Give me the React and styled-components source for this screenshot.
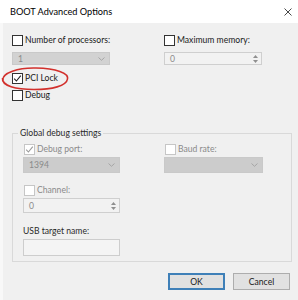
import React from "react";
import styled, { createGlobalStyle } from "styled-components";

const GlobalStyle = createGlobalStyle`
  html, body {
    margin: 0;
    padding: 0;
  }
  body {
    width: 298px;
    height: 300px;
    overflow: hidden;
    background: #f0f0f0;
    font-family: Lato, "Liberation Sans", sans-serif;
    font-size: 8.6px;
    color: #1a1a1a;
  }
`;

const Check = ({ checked, disabled }) => (
  <Box $disabled={disabled}>
    {checked && (
      <svg width="9" height="9" viewBox="0 0 9 9">
        <path
          d="M1.2 4.6 L3.4 7 L7.8 1.6"
          fill="none"
          stroke={disabled ? "#9a9a9a" : "#222"}
          strokeWidth="1.1"
        />
      </svg>
    )}
  </Box>
);

const CheckField = ({ label, checked, disabled, mt }) => (
  <CheckRow $disabled={disabled} $mt={mt}>
    <Check checked={checked} disabled={disabled} />
    <span>{label}</span>
  </CheckRow>
);

const Chevron = () => (
  <svg width="7" height="4" viewBox="0 0 7 4">
    <path d="M0.5 0.5 L3.5 3.3 L6.5 0.5" fill="none" stroke="#a6a6a6" strokeWidth="1" />
  </svg>
);

const SpinArrows = () => (
  <Arrows>
    <svg width="5" height="3" viewBox="0 0 5 3">
      <path d="M2.5 0 L5 3 L0 3 Z" fill="#8f8f8f" />
    </svg>
    <svg width="5" height="3" viewBox="0 0 5 3">
      <path d="M0 0 L5 0 L2.5 3 Z" fill="#8f8f8f" />
    </svg>
  </Arrows>
);

export default function App() {
  return (
    <Window>
      <GlobalStyle />
      <TitleBar>
        <span>BOOT Advanced Options</span>
        <svg width="8" height="8" viewBox="0 0 8 8">
          <path d="M0.5 0.5 L7.5 7.5 M7.5 0.5 L0.5 7.5" stroke="#333" strokeWidth="0.9" />
        </svg>
      </TitleBar>

      <Body>
        <Columns $left={152}>
          <Field $gap={6}>
            <CheckField label="Number of processors:" />
            <Select $w={98} $h={13} $bg="#d2d2d2">
              <span>1</span>
              <Chevron />
            </Select>
          </Field>
          <Field $gap={6}>
            <CheckField label="Maximum memory:" />
            <Spinner $w={98} $h={13}>
              <span>0</span>
              <SpinArrows />
            </Spinner>
          </Field>
        </Columns>

        <CheckField label="PCI Lock" checked mt={8} />
        <CheckField label="Debug" mt={6} />

        <Group>
          <Legend>Global debug settings</Legend>
          <GroupBody $left={141}>
            <Field $gap={2}>
              <CheckField label="Debug port:" checked disabled />
              <Select $w={97} $h={16} $bg="#cccccc">
                <span>1394</span>
                <Chevron />
              </Select>
              <CheckField label="Channel:" disabled mt={10} />
              <Spinner $w={97} $h={15}>
                <span>0</span>
                <SpinArrows />
              </Spinner>
              <FieldLabel>USB target name:</FieldLabel>
              <TextBox />
            </Field>
            <Field $gap={2}>
              <CheckField label="Baud rate:" disabled />
              <Select $w={99} $h={16} $bg="#cccccc">
                <span />
                <Chevron />
              </Select>
            </Field>
          </GroupBody>
        </Group>

        <Buttons>
          <Button $primary>OK</Button>
          <Button>Cancel</Button>
        </Buttons>
      </Body>

      <Circle width="72" height="30" viewBox="0 0 72 30">
        <path
          d="M3 16 C2 9 18 3.5 36 4 C56 4.5 69 9 67.5 15 C66.5 22 52 25.5 34 25.5 C16 25.5 1.5 22 2.5 14"
          fill="none"
          stroke="#d2302c"
          strokeWidth="1.6"
        />
      </Circle>
    </Window>
  );
}

const Window = styled.div`
  position: relative;
  width: 298px;
  height: 300px;
  display: flex;
  flex-direction: column;
  background: #f0f0f0;
`;

const TitleBar = styled.header`
  height: 23px;
  flex: none;
  box-sizing: border-box;
  display: flex;
  align-items: center;
  justify-content: space-between;
  padding: 0 6px 0 10px;
  background: #fff;
  color: #000;
  font-size: 9.2px;
`;

const Body = styled.div`
  flex: 1;
  display: flex;
  flex-direction: column;
  padding: 12px 6px 0 9px;
  border-left: 3px solid #f8f8f8;
`;

const Columns = styled.div`
  display: grid;
  grid-template-columns: ${(p) => p.$left}px 1fr;
`;

const Field = styled.div`
  display: flex;
  flex-direction: column;
  align-items: flex-start;
  gap: ${(p) => p.$gap}px;
`;

const CheckRow = styled.label`
  display: flex;
  align-items: center;
  gap: 2px;
  height: 11px;
  line-height: 11px;
  margin-top: ${(p) => p.$mt || 0}px;
  color: ${(p) => (p.$disabled ? "#8a8a8a" : "#1a1a1a")};
  white-space: nowrap;
`;

const Box = styled.span`
  width: 11px;
  height: 11px;
  box-sizing: border-box;
  display: flex;
  align-items: center;
  justify-content: center;
  background: #fff;
  border: 1px solid ${(p) => (p.$disabled ? "#c6c6c6" : "#333")};
`;

const Select = styled.div`
  box-sizing: border-box;
  width: ${(p) => p.$w}px;
  height: ${(p) => p.$h}px;
  display: flex;
  align-items: center;
  justify-content: space-between;
  padding: 0 4px 0 5px;
  background: ${(p) => p.$bg};
  border: 1px solid #c9c9c9;
  color: #8a8a8a;
`;

const Spinner = styled.div`
  box-sizing: border-box;
  width: ${(p) => p.$w}px;
  height: ${(p) => p.$h}px;
  display: flex;
  align-items: center;
  justify-content: space-between;
  padding: 0 3px 0 5px;
  background: #f2f2f2;
  border: 1px solid #cfcfcf;
  color: #8a8a8a;
`;

const Arrows = styled.div`
  display: flex;
  flex-direction: column;
  gap: 2px;
`;

const Group = styled.fieldset`
  margin: 26px 0 0;
  padding: 0;
  border: 1px solid #d9d9d9;
  min-width: 0;
`;

const Legend = styled.legend`
  margin-left: 5px;
  padding: 0 2px;
  line-height: 12px;
  color: #2a2a2a;
`;

const GroupBody = styled.div`
  display: grid;
  grid-template-columns: ${(p) => p.$left}px 1fr;
  padding: 5px 0 5px 10px;

  label {
    margin-left: 1px;
  }
`;

const FieldLabel = styled.div`
  margin-top: 11px;
  height: 11px;
  line-height: 11px;
  color: #2a2a2a;
`;

const TextBox = styled.div`
  box-sizing: border-box;
  width: 97px;
  height: 17px;
  background: #f4f4f4;
  border: 1px solid #cdcdcd;
`;

const Buttons = styled.div`
  display: flex;
  justify-content: flex-end;
  gap: 8px;
  margin-top: 11px;
  padding-right: 2px;
`;

const Button = styled.button`
  box-sizing: border-box;
  width: 57px;
  height: 17px;
  padding: 0;
  font-family: inherit;
  font-size: 8.6px;
  color: #1a1a1a;
  background: #e1e1e1;
  border: ${(p) => (p.$primary ? "2px solid #3f80b8" : "1px solid #adadad")};
`;

const Circle = styled.svg`
  position: absolute;
  left: 0;
  top: 64px;
  pointer-events: none;
`;
